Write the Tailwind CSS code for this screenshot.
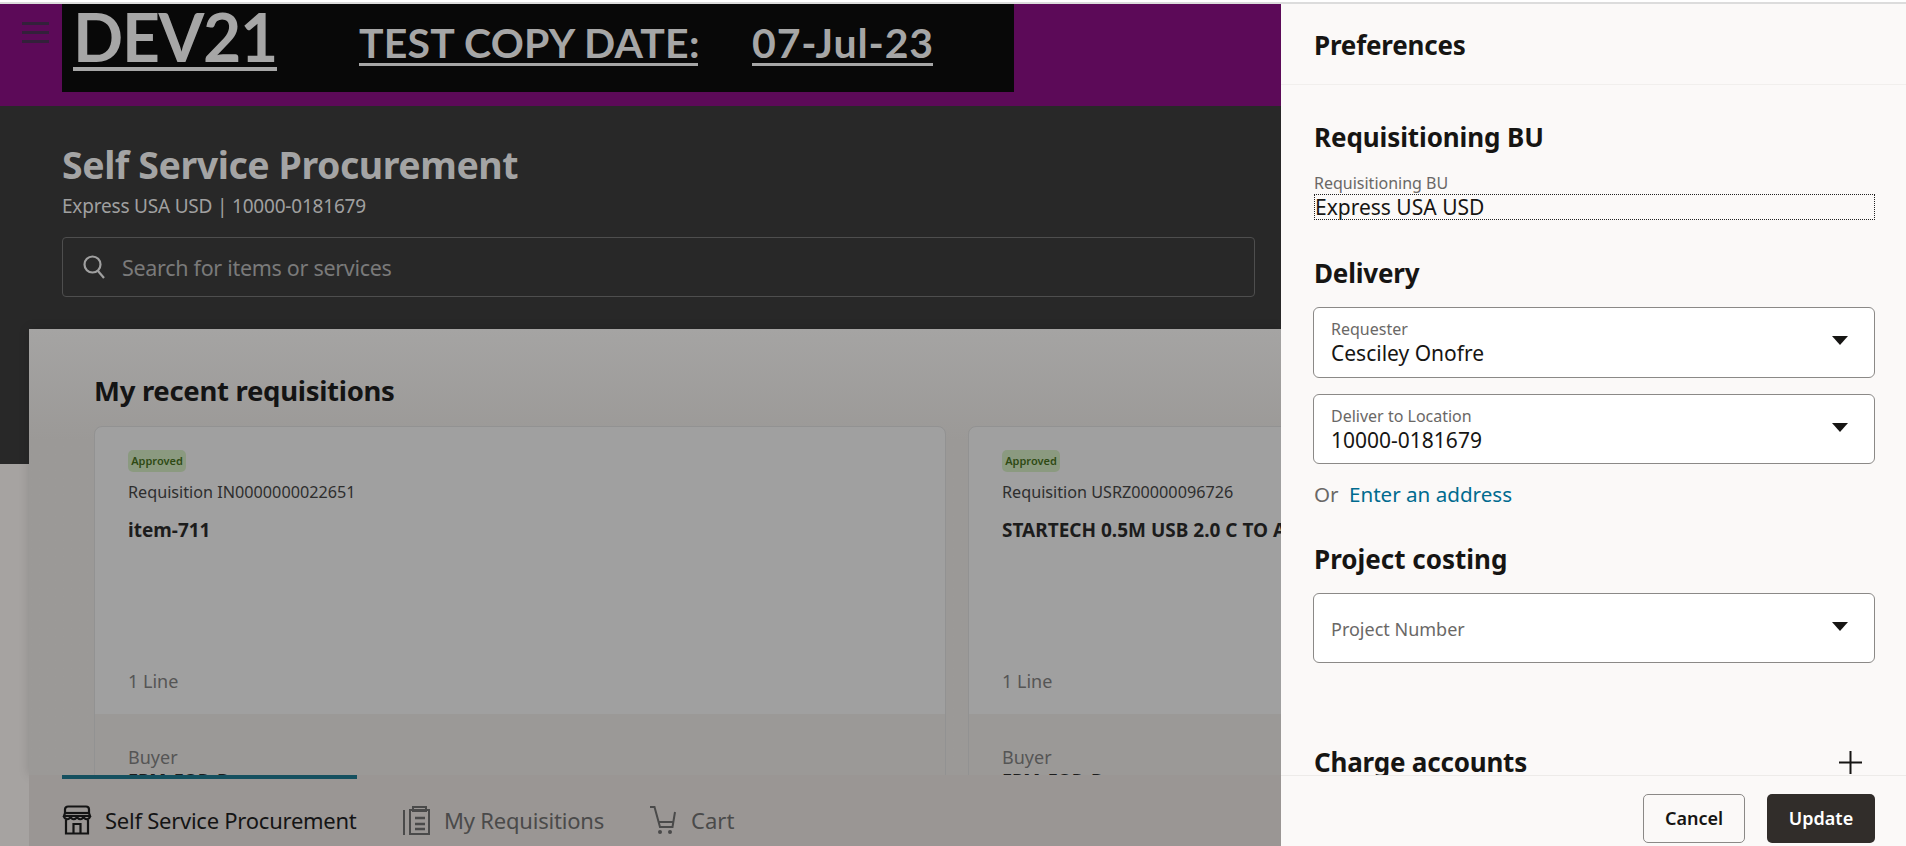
<!DOCTYPE html>
<html><head><meta charset="utf-8"><script src="https://cdn.jsdelivr.net/npm/@tailwindcss/browser@4"></script></head>
<body class="m-0">
<div class="w-[1906px] h-[846px] overflow-hidden flex flex-col bg-white font-['Noto_Sans',sans-serif]">
<div class="h-[2px] bg-white"></div>
<div class="h-[2px] bg-[#dcdcdc]"></div>
<div class="flex flex-1 min-h-0">
  <div class="w-[1281px] shrink-0 flex flex-col bg-[#a6a3a1] overflow-hidden">
    <div class="h-[102px] shrink-0 bg-[#5c0a58] relative">
      <div class="absolute left-[22px] top-[18px] w-[27px] flex flex-col gap-[6px]">
        <div class="h-[3px] bg-[#33203a]"></div><div class="h-[3px] bg-[#33203a]"></div><div class="h-[3px] bg-[#33203a]"></div>
      </div>
      <div class="ml-[62px] w-[952px] h-[88px] bg-[#080808] flex items-start text-[#a6a6a6] font-['Lato',sans-serif] font-bold relative">
        <span class="ml-[11px] mt-[-6px] h-[73px] w-[204px] border-b-[4px] border-[#a6a6a6] text-[66px] leading-[78px] tracking-[-1.3px]">DEV21</span>
        <span class="ml-[82px] mt-[16px] h-[46px] w-[339px] border-b-[3px] border-[#a6a6a6] text-[41px] leading-[46px] tracking-[0.2px] whitespace-nowrap">TEST COPY DATE:</span>
        <span class="ml-[54px] mt-[16px] h-[46px] w-[181px] border-b-[3px] border-[#a6a6a6] text-[41px] leading-[46px] tracking-[0.9px] whitespace-nowrap">07-Jul-23</span>
      </div>
    </div>
    <div class="h-[358px] shrink-0 bg-[#282828] pl-[62px] pt-[37px]">
      <h1 class="text-[37.500px] leading-[44px] font-bold text-[#a4a4a4] tracking-[-0.45px]">Self Service Procurement</h1>
      <p class="text-[19px] leading-[24px] mt-[7px] text-[#a0a0a0] tracking-[-0.2px]">Express USA USD | 10000-0181679</p>
      <div class="mt-[19px] w-[1193px] h-[60px] border border-[#4e4e4e] rounded-[4px] flex items-center pl-[19px] gap-[16px]">
        <svg class="w-[24px] h-[26px]" viewBox="0 0 24 26" fill="none" stroke="#a0a0a0" stroke-width="2.200"><circle cx="10.500" cy="10.500" r="8"/><path d="M16 17l6 7"/></svg>
        <span class="text-[21.500px] text-[#7a7a7a] tracking-[-0.3px] translate-y-px">Search for items or services</span>
      </div>
    </div>
    <div class="flex-1 min-h-0 -mt-[135px] ml-[29px] bg-linear-to-b from-[#a5a4a3] to-[#9b9997] to-[25%] overflow-hidden pl-[65px] shadow-[0_0_10px_rgba(0,0,0,0.15)]">
      <h2 class="mt-[46px] text-[27.500px] leading-[32px] font-bold text-[#141414] tracking-[-0.3px]">My recent requisitions</h2>
      <div class="flex gap-[22px] mt-[19px]">
        <div class="w-[852px] shrink-0 h-[400px] bg-[#a0a0a0] border border-[#929292] rounded-t-[8px]">
          <div class="h-[287px] pl-[33px] pt-[20px]">
            <span class="inline-block h-[22px] w-[58px] rounded-[5px] bg-[#8b9a80] text-[#2f4a14] text-[11px] leading-[22px] font-semibold text-center">Approved</span>
            <p class="mt-[10px] text-[16.200px] leading-[20px] text-[#2e2e2e]">Requisition IN0000000022651</p>
            <p class="mt-[16px] text-[19px] leading-[24px] font-bold text-[#1c1c1c]">item-711</p>
            <p class="mt-[127px] text-[18px] leading-[24px] text-[#555]">1 Line</p>
          </div>
          <div class="h-[113px] bg-[#9b9997] pl-[33px] pt-[32px]">
            <p class="text-[18px] leading-[22px] text-[#555]">Buyer</p>
            <p class="text-[18px] leading-[24px] font-bold text-[#1c1c1c]">EPM_FOR_D</p>
          </div>
        </div>
        <div class="w-[852px] shrink-0 h-[400px] bg-[#a0a0a0] border border-[#929292] rounded-t-[8px]">
          <div class="h-[287px] pl-[33px] pt-[20px]">
            <span class="inline-block h-[22px] w-[58px] rounded-[5px] bg-[#8b9a80] text-[#2f4a14] text-[11px] leading-[22px] font-semibold text-center">Approved</span>
            <p class="mt-[10px] text-[16.200px] leading-[20px] text-[#2e2e2e]">Requisition USRZ00000096726</p>
            <p class="mt-[16px] text-[19px] leading-[24px] font-bold text-[#1c1c1c] whitespace-nowrap">STARTECH 0.5M USB 2.0 C TO A CABLE</p>
            <p class="mt-[127px] text-[18px] leading-[24px] text-[#555]">1 Line</p>
          </div>
          <div class="h-[113px] bg-[#9b9997] pl-[33px] pt-[32px]">
            <p class="text-[18px] leading-[22px] text-[#555]">Buyer</p>
            <p class="text-[18px] leading-[24px] font-bold text-[#1c1c1c]">EPM_FOR_D</p>
          </div>
        </div>
      </div>
    </div>
    <nav class="h-[71px] shrink-0 ml-[29px] bg-[#9a9694] flex pl-[33px] text-[22px] relative">
      <div class="w-[295px] border-t-[4px] border-[#15505f] flex items-center gap-[13px] h-full pt-[15px] text-[#141414]">
        <svg class="w-[30px] h-[30px] shrink-0" viewBox="0 0 30 30" fill="none" stroke="#141414" stroke-width="2.200"><path d="M6 1.500h18a3 3 0 0 1 3 3V8l1 3H2l1-3V4.500a3 3 0 0 1 3-3z"/><path d="M3 8h24"/><path d="M2 11a3.250 3.250 0 0 0 6.500 0 3.250 3.250 0 0 0 6.500 0 3.250 3.250 0 0 0 6.500 0 3.250 3.250 0 0 0 6.500 0"/><path d="M4 15v13.500h22V15"/><path d="M11.500 28.500V19h7v9.500"/></svg>
        <span class="tracking-[-0.25px] whitespace-nowrap">Self Service Procurement</span>
      </div>
      <div class="ml-[46px] flex items-center gap-[14px] pt-[19px] text-[#4a4a4a]">
        <svg class="w-[27px] h-[29px] shrink-0" viewBox="0 0 27 29" fill="none" stroke="#4a4a4a" stroke-width="2"><path d="M1 4v25"/><path d="M7 4h19v24H7z"/><path d="M10 5V1h13v4z"/><path d="M12 12h10M12 18h10M12 23h10" stroke-width="2.400"/></svg>
        <span class="tracking-[-0.2px] whitespace-nowrap">My Requisitions</span>
      </div>
      <div class="ml-[46px] flex items-center gap-[15px] pt-[19px] text-[#4a4a4a]">
        <svg class="w-[26px] h-[29px] shrink-0" viewBox="0 0 26 29" fill="none" stroke="#4a4a4a" stroke-width="2"><path d="M0 1h4.500l5.500 20h12.500l2.500-15"/><path d="M8.500 16h15.500"/><circle cx="10" cy="26" r="2" fill="#4a4a4a" stroke="none"/><circle cx="20" cy="26" r="2" fill="#4a4a4a" stroke="none"/></svg>
        <span>Cart</span>
      </div>
    </nav>
  </div>
  <aside class="w-[625px] shrink-0 bg-[#fbf9f8] flex flex-col text-[#161513]">
    <div class="h-[81px] shrink-0 border-b border-[#f1efed] pl-[33px] pt-[25px]">
      <h2 class="text-[26px] leading-[32px] font-bold tracking-[-0.2px]">Preferences</h2>
    </div>
    <div class="flex-1 min-h-0 overflow-hidden pl-[33px] pr-[31px]">
      <h3 class="mt-[36px] text-[26px] leading-[32px] font-bold tracking-[-0.1px]">Requisitioning BU</h3>
      <p class="mt-[20px] text-[16px] leading-[20px] text-[#6a6866]">Requisitioning BU</p>
      <div class="mt-[1px] h-[26px] border border-dotted border-[#222] text-[21px] leading-[24px]">Express USA USD</div>
      <h3 class="mt-[37px] text-[26px] leading-[32px] font-bold tracking-[-0.2px]">Delivery</h3>
      <div class="mt-[18px] -ml-px h-[71px] bg-white border border-[#8b8987] rounded-[6px] flex items-center justify-between pl-[17px] pr-[26px]">
        <div><p class="text-[16px] leading-[20px] text-[#6a6866]">Requester</p><p class="text-[21px] leading-[26px] mt-[1px]">Cesciley Onofre</p></div>
        <svg class="w-[16px] h-[9px] mb-[4px]" viewBox="0 0 16 9"><path d="M0 0h16L8 9z" fill="#161513"/></svg>
      </div>
      <div class="mt-[16px] -ml-px h-[70px] bg-white border border-[#8b8987] rounded-[6px] flex items-center justify-between pl-[17px] pr-[26px]">
        <div><p class="text-[16px] leading-[20px] text-[#6a6866]">Deliver to Location</p><p class="text-[21px] leading-[26px] mt-[1px]">10000-0181679</p></div>
        <svg class="w-[16px] h-[9px] mb-[4px]" viewBox="0 0 16 9"><path d="M0 0h16L8 9z" fill="#161513"/></svg>
      </div>
      <p class="mt-[16px] text-[20.600px] leading-[28px] text-[#6a6866]">Or <a class="ml-[5px] text-[#006b8f]">Enter an address</a></p>
      <h3 class="mt-[35px] text-[26px] leading-[32px] font-bold">Project costing</h3>
      <div class="mt-[18px] -ml-px h-[70px] bg-white border border-[#8b8987] rounded-[6px] flex items-center justify-between pl-[17px] pr-[26px]">
        <p class="text-[18px] leading-[24px] text-[#6a6866] translate-y-px">Project Number</p>
        <svg class="w-[16px] h-[9px] mb-[4px]" viewBox="0 0 16 9"><path d="M0 0h16L8 9z" fill="#161513"/></svg>
      </div>
      <div class="mt-[83px] flex items-center justify-between pr-[13px]">
        <h3 class="text-[26px] leading-[32px] font-bold tracking-[-0.2px]">Charge accounts</h3>
        <svg class="w-[23px] h-[23px]" viewBox="0 0 23 23" stroke="#161513" stroke-width="2"><path d="M0 11.500h23M11.500 0v23"/></svg>
      </div>
    </div>
    <div class="h-[71px] shrink-0 border-t border-[#edebe9] flex justify-end items-start gap-[22px] pr-[31px] pt-[18px] text-[18px] font-semibold">
      <button class="w-[102px] h-[49px] border border-[#8b8987] rounded-[5px]">Cancel</button>
      <button class="w-[108px] h-[49px] bg-[#312d2a] text-white rounded-[5px]">Update</button>
    </div>
  </aside>
</div>
</div>
</body></html>
